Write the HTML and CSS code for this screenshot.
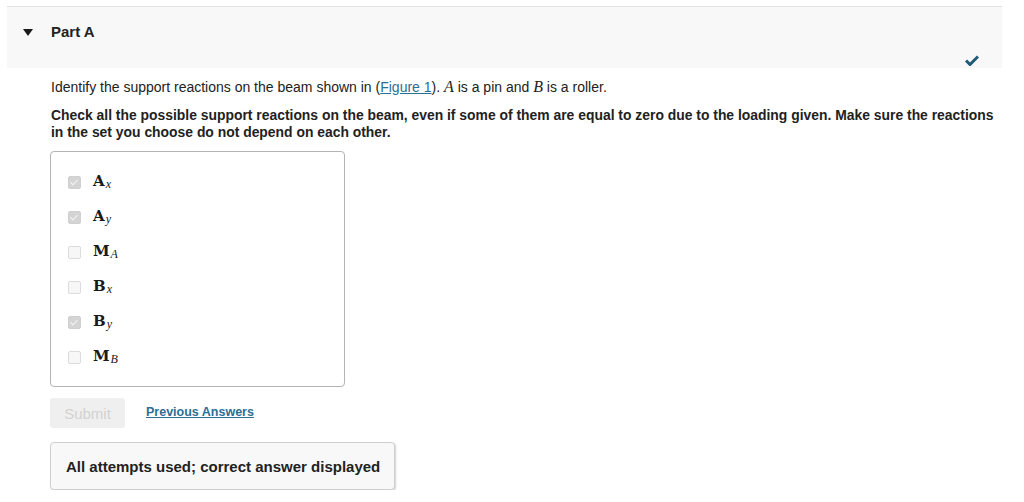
FILE: index.html
```html
<!DOCTYPE html>
<html>
<head>
<meta charset="utf-8">
<link rel="stylesheet" href="styles.css">
</head>
<body>
<div class="part">
  <div class="part-header">
    <span class="caret"></span>
    <span class="part-title">Part A</span>
    <svg class="status" width="14" height="11" viewBox="0 0 14 11"><path d="M1 5.5 L5 9.5 L13 1.5" fill="none" stroke="#1f5b74" stroke-width="3"/></svg>
  </div>
  <div class="part-body">
    <p class="prompt">Identify the support reactions on the beam shown in (<a class="fig" href="#">Figure 1</a>). <span class="mi">A</span> is a pin and <span class="mi">B</span> is a roller.</p>
    <p class="instr">Check all the possible support reactions on the beam, even if some of them are equal to zero due to the loading given. Make sure the reactions in the set you choose do not depend on each other.</p>
    <div class="choices">
      <div class="choice"><span class="cb on"></span><span class="lbl"><b>A</b><sub>x</sub></span></div>
      <div class="choice"><span class="cb on"></span><span class="lbl"><b>A</b><sub>y</sub></span></div>
      <div class="choice"><span class="cb"></span><span class="lbl"><b>M</b><sub>A</sub></span></div>
      <div class="choice"><span class="cb"></span><span class="lbl"><b>B</b><sub>x</sub></span></div>
      <div class="choice"><span class="cb on"></span><span class="lbl"><b>B</b><sub>y</sub></span></div>
      <div class="choice"><span class="cb"></span><span class="lbl"><b>M</b><sub>B</sub></span></div>
    </div>
    <div class="actions">
      <span class="submit">Submit</span>
      <a class="prev" href="#">Previous Answers</a>
    </div>
    <div class="feedback">All attempts used; correct answer displayed</div>
  </div>
</div>
</body>
</html>
```
FILE: styles.css
```css
* { box-sizing: border-box; }
body {
  margin: 0;
  background: #fff;
  font-family: "Liberation Sans", Arial, sans-serif;
  color: #222;
}
.part {
  margin: 6px 22px 0 7px;
}
.part-header {
  position: relative;
  height: 62px;
  background: #f8f8f8;
  border-top: 1px solid #e2e2e2;
  display: flex;
  align-items: center;
  padding-left: 16px;
}
.caret {
  width: 0;
  height: 0;
  border-left: 5.5px solid transparent;
  border-right: 5.5px solid transparent;
  border-top: 7px solid #1a1a1a;
  margin-top: -10px;
}
.part-title {
  font-weight: bold;
  font-size: 15px;
  margin-left: 18px;
  margin-top: -12px;
}
.status {
  position: absolute;
  right: 23px;
  bottom: 2px;
}
.part-body {
  padding-left: 43px;
}
.prompt {
  margin: 11px 0 0 1px;
  font-size: 14px;
  line-height: 16px;
}
.fig { color: #2a6f97; }
.mi {
  font-family: "Liberation Serif", "Times New Roman", serif;
  font-style: italic;
  font-size: 16px;
}
.instr {
  margin: 12px 0 0 1px;
  font-size: 13.9px;
  font-weight: bold;
  line-height: 17px;
}
.choices {
  margin-top: 10px;
  width: 295px;
  height: 236px;
  border: 1px solid #b4b4b4;
  border-radius: 4px;
  padding: 21px 0 0 17px;
  display: flex;
  flex-direction: column;
  gap: 17px;
}
.choice {
  display: flex;
  align-items: center;
  height: 18px;
}
.cb {
  width: 13px;
  height: 13px;
  border: 1px solid #dcdcdc;
  border-radius: 2px;
  background: #f7f7f7;
  position: relative;
}
.cb.on {
  background: #d4d4d4;
  border-color: #d0d0d0;
}
.cb.on::after {
  content: "";
  position: absolute;
  left: 3px;
  top: 1px;
  width: 3px;
  height: 6px;
  border-right: 1.5px solid #f4f4f4;
  border-bottom: 1.5px solid #f4f4f4;
  transform: rotate(45deg);
}
.lbl {
  margin-left: 12px;
  font-family: "DejaVu Serif", "Liberation Serif", serif;
  font-size: 15px;
  color: #1a1a1a;
}
.lbl b { font-weight: bold; }
.lbl sub {
  font-style: italic;
  font-family: "Liberation Serif", serif;
  font-size: 12px;
  vertical-align: -2px;
  margin-left: 1px;
}
.actions {
  margin-top: 11px;
  display: flex;
  align-items: center;
}
.submit {
  width: 75px;
  height: 30px;
  background: #efefef;
  border-radius: 3px;
  color: #d2d2d2;
  font-size: 15px;
  display: flex;
  align-items: center;
  justify-content: center;
}
.prev {
  margin-left: 21px;
  font-size: 12.5px;
  font-weight: bold;
  color: #2d6f94;
  margin-top: -2px;
}
.feedback {
  margin-top: 14px;
  width: 345px;
  height: 48px;
  background: #f8f8f8;
  border: 1px solid #cfcfcf;
  border-radius: 4px;
  box-shadow: 1px 1px 2px rgba(0,0,0,0.18);
  font-size: 15px;
  font-weight: bold;
  padding-left: 15px;
  display: flex;
  align-items: center;
}
```
